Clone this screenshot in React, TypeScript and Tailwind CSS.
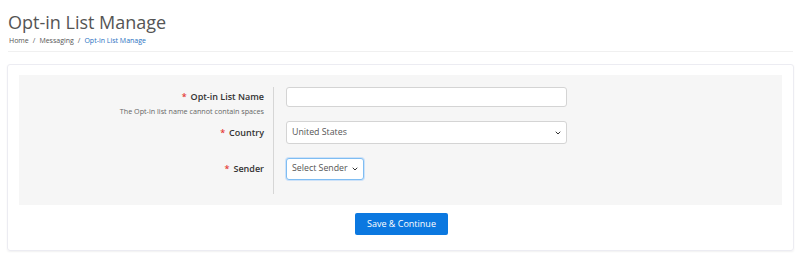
import { ChevronDown } from "lucide-react";

const Label = ({ text }: { text: string }) => (
  <span className="text-[9px] font-semibold text-[#333]">
    <span className="text-[#e53935] mr-[4px]">*</span>
    {text}
  </span>
);

const Select = ({ value, className }: { value: string; className: string }) => (
  <div
    className={`relative flex items-center bg-white rounded-[3px] px-[5px] text-[8.8px] text-[#555] ${className}`}
  >
    <span>{value}</span>
    <ChevronDown size={8} strokeWidth={3} className="absolute right-[4px] text-[#333]" />
  </div>
);

export default function App() {
  return (
    <div className="w-[800px] h-[256px] bg-white px-[8px] pt-[10px] font-['Open_Sans',sans-serif]">
      <h1 className="text-[18px] leading-[24px] text-[#555] font-normal">Opt-in List Manage</h1>
      <div className="text-[7px] leading-[10px] text-[#555] mt-[2px] ml-[1px] flex gap-[4px]">
        <span>Home</span>
        <span>/</span>
        <span>Messaging</span>
        <span>/</span>
        <span className="text-[#2b72c2]">Opt-in List Manage</span>
      </div>
      <div className="border-b border-[#f0f0f0] mt-[5px] mr-[-1px]" />

      <div className="mt-[12px] w-[787px] h-[187px] -ml-[1px] border border-[#ececf2] rounded-[3px] shadow-[0_1px_2px_rgba(0,0,0,0.06)] px-[11px] pt-[10px]">
        <div className="bg-[#f6f6f6] h-[130px] pt-[12px]">
          <div className="grid grid-cols-[255px_1fr]">
            <div className="border-r border-[#d6d6d6] pr-[9px] pb-[6px] flex flex-col items-end">
              <div className="h-[20px] flex items-center">
                <Label text="Opt-in List Name" />
              </div>
              <div className="text-[7.2px] leading-[8px] text-[#666]">
                The Opt-in list name cannot contain spaces
              </div>
            </div>
            <div className="pl-[12px]">
              <div className="w-[281px] h-[20px] bg-white border border-[#d4d4d4] rounded-[3px]" />
            </div>

            <div className="border-r border-[#d6d6d6] pr-[9px] pb-[14px] flex justify-end">
              <div className="h-[23px] flex items-center">
                <Label text="Country" />
              </div>
            </div>
            <div className="pl-[12px]">
              <Select value="United States" className="w-[281px] h-[23px] border border-[#d4d4d4]" />
            </div>

            <div className="border-r border-[#d6d6d6] pr-[9px] pb-[14px] flex justify-end">
              <div className="h-[22px] flex items-center">
                <Label text="Sender" />
              </div>
            </div>
            <div className="pl-[12px]">
              <Select
                value="Select Sender"
                className="w-[78px] h-[22px] border border-[#7fbdf2] shadow-[0_0_0_1px_rgba(128,189,255,0.35)]"
              />
            </div>
          </div>
        </div>
        <div className="flex justify-center mt-[8px] pl-[2px]">
          <button className="w-[93px] h-[22px] bg-[#0b78e0] text-white text-[9px] rounded-[2px]">
            Save &amp; Continue
          </button>
        </div>
      </div>
    </div>
  );
}
